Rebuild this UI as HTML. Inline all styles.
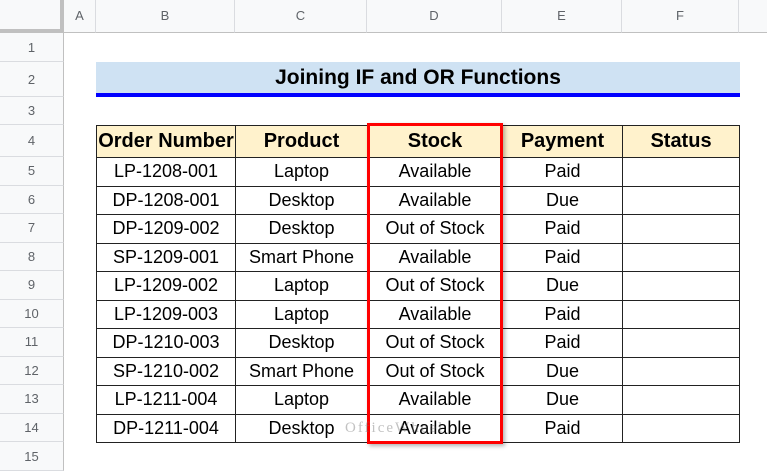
<!DOCTYPE html><html><head><style>
body{margin:0;width:767px;height:471px;overflow:hidden;background:#fff;font-family:"Liberation Sans",Arial,sans-serif;position:relative}
.a{position:absolute;box-sizing:border-box}
.ch{background:#f8f9fa;border-right:1px solid #dadce0;border-bottom:1px solid #c0c0c0;color:#5f6368;font-size:13px;text-align:center;line-height:32px;top:0;height:33px}
.rh{background:#f8f9fa;border-bottom:1px solid #dadce0;border-right:1px solid #c0c0c0;color:#5f6368;font-size:13px;text-align:center;left:0;width:64px}
table{position:absolute;left:96px;top:125px;border-collapse:collapse;width:644px}
td{border:1px solid #222;text-align:center;font-size:18px;height:28.5px;padding:0;box-sizing:border-box;color:#000}
tr.h td{background:#fff2cc;font-weight:bold;font-size:20px;height:32px}
</style></head><body>
<div class="a ch" style="left:0;width:64px;border-right:4px solid #c0c0c0;border-bottom:4px solid #c0c0c0"></div>
<div class="a ch" style="left:64px;width:32px">A</div>
<div class="a ch" style="left:96px;width:139px">B</div>
<div class="a ch" style="left:235px;width:132px">C</div>
<div class="a ch" style="left:367px;width:135px">D</div>
<div class="a ch" style="left:502px;width:120px">E</div>
<div class="a ch" style="left:622px;width:117px">F</div>
<div class="a ch" style="left:739px;width:40px"></div>
<div class="a rh" style="top:33px;height:29px;line-height:29px">1</div>
<div class="a rh" style="top:62px;height:35px;line-height:35px">2</div>
<div class="a rh" style="top:97px;height:28px;line-height:28px">3</div>
<div class="a rh" style="top:125px;height:32px;line-height:32px">4</div>
<div class="a rh" style="top:157px;height:28.5px;line-height:28px">5</div>
<div class="a rh" style="top:185.5px;height:28.5px;line-height:28px">6</div>
<div class="a rh" style="top:214px;height:28.5px;line-height:28px">7</div>
<div class="a rh" style="top:242.5px;height:28.5px;line-height:28px">8</div>
<div class="a rh" style="top:271px;height:28.5px;line-height:28px">9</div>
<div class="a rh" style="top:299.5px;height:28.5px;line-height:28px">10</div>
<div class="a rh" style="top:328px;height:28.5px;line-height:28px">11</div>
<div class="a rh" style="top:356.5px;height:28.5px;line-height:28px">12</div>
<div class="a rh" style="top:385px;height:28.5px;line-height:28px">13</div>
<div class="a rh" style="top:413.5px;height:28.5px;line-height:28px">14</div>
<div class="a rh" style="top:442px;height:29px;line-height:29px">15</div>
<div class="a" style="left:96px;top:62px;width:644px;height:35px;background:#cfe2f3;border-bottom:4px solid #0000ff;text-align:center;font-weight:bold;font-size:21px;line-height:31px">Joining IF and OR Functions</div>
<table>
<tr class="h"><td style="width:139px">Order Number</td><td style="width:132px">Product</td><td style="width:135px">Stock</td><td style="width:120px">Payment</td><td>Status</td></tr>
<tr><td>LP-1208-001</td><td>Laptop</td><td>Available</td><td>Paid</td><td></td></tr>
<tr><td>DP-1208-001</td><td>Desktop</td><td>Available</td><td>Due</td><td></td></tr>
<tr><td>DP-1209-002</td><td>Desktop</td><td>Out of Stock</td><td>Paid</td><td></td></tr>
<tr><td>SP-1209-001</td><td>Smart Phone</td><td>Available</td><td>Paid</td><td></td></tr>
<tr><td>LP-1209-002</td><td>Laptop</td><td>Out of Stock</td><td>Due</td><td></td></tr>
<tr><td>LP-1209-003</td><td>Laptop</td><td>Available</td><td>Paid</td><td></td></tr>
<tr><td>DP-1210-003</td><td>Desktop</td><td>Out of Stock</td><td>Paid</td><td></td></tr>
<tr><td>SP-1210-002</td><td>Smart Phone</td><td>Out of Stock</td><td>Due</td><td></td></tr>
<tr><td>LP-1211-004</td><td>Laptop</td><td>Available</td><td>Due</td><td></td></tr>
<tr><td>DP-1211-004</td><td>Desktop</td><td>Available</td><td>Paid</td><td></td></tr>
</table>
<div class="a" style="left:367px;top:123px;width:136px;height:321px;border:3px solid #f00;box-shadow:2px 2px 4px rgba(0,0,0,.3)"></div>
<div class="a" style="left:345px;top:420px;font-family:'Liberation Serif',serif;font-size:15px;color:rgba(120,120,120,.45);letter-spacing:2px">OfficeWheel</div>
</body></html>
